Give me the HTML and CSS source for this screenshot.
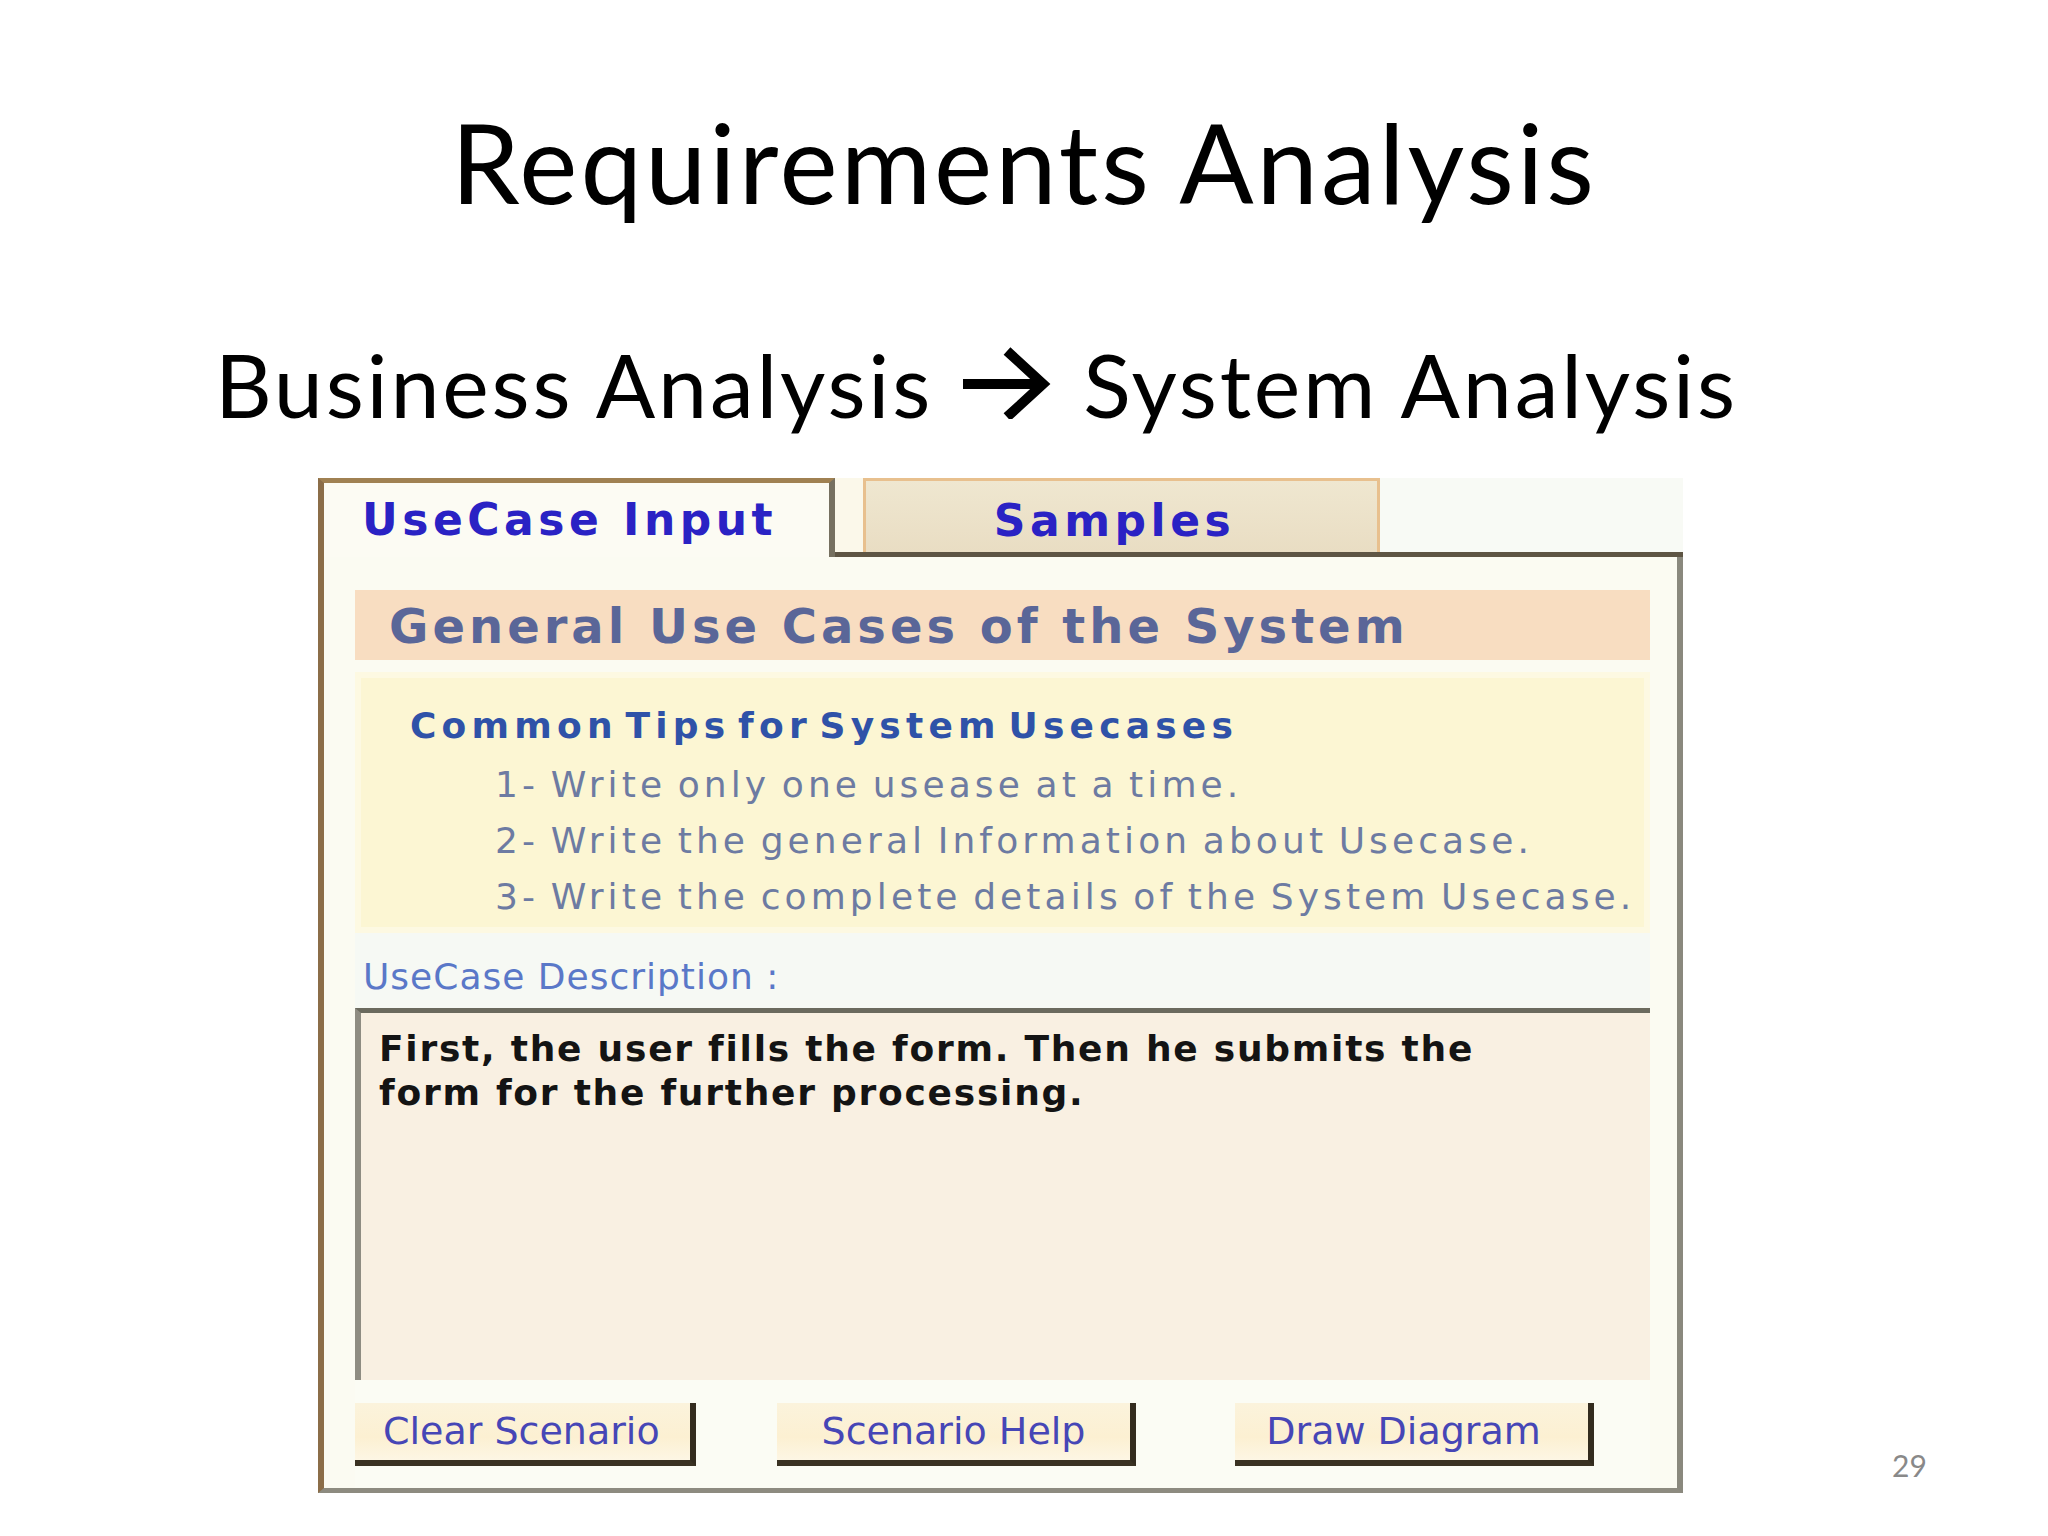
FILE: index.html
```html
<!DOCTYPE html>
<html lang="en">
<head>
<meta charset="utf-8">
<title>Requirements Analysis</title>
<link rel="stylesheet" href="styles.css">
</head>
<body>
<div class="slide">
  <h1 class="title">Requirements Analysis</h1>
  <div class="subtitle">
    <span>Business Analysis</span>
    <svg class="arrow" viewBox="0 0 88 72" width="88" height="72" aria-hidden="true">
      <path d="M0 37 H78" stroke="#000" stroke-width="10" fill="none"/>
      <path d="M44 4 L80 37 L44 70" stroke="#000" stroke-width="10" fill="none" stroke-linejoin="miter"/>
    </svg>
    <span>System Analysis</span>
  </div>
  <div class="bottom-row">
    <div class="panel">
      <div class="tabs">
        <div class="tab tab-active">UseCase Input</div>
        <div class="tab-rest">
          <div class="tab-gap"></div>
          <div class="tab tab-inactive">Samples</div>
          <div class="tab-fill"></div>
        </div>
      </div>
      <div class="panel-body">
        <div class="band">General Use Cases of the System</div>
        <div class="tips">
          <div class="tips-title">Common Tips for System Usecases</div>
          <div class="tip">1- Write only one usease at a time.</div>
          <div class="tip">2- Write the general Information about Usecase.</div>
          <div class="tip">3- Write the complete details of the System Usecase.</div>
        </div>
        <div class="desc-label">UseCase Description :</div>
        <div class="textarea">First, the user fills the form. Then he submits the<br>form for the further processing.</div>
        <div class="buttons">
          <div class="btn btn-clear">Clear Scenario</div>
          <div class="btn btn-help">Scenario Help</div>
          <div class="btn btn-draw">Draw Diagram</div>
        </div>
      </div>
    </div>
    <div class="page-num">29</div>
  </div>
</div>
</body>
</html>
```
FILE: styles.css
```css
html, body {
  margin: 0;
  padding: 0;
  background: #ffffff;
}

.slide {
  width: 2048px;
  height: 1536px;
  overflow: hidden;
  display: flex;
  flex-direction: column;
  font-family: Lato, "Open Sans", sans-serif;
  color: #000;
}

.title {
  margin: 95px 0 0 0;
  font-weight: 400;
  font-size: 110px;
  line-height: 132px;
  text-align: center;
  letter-spacing: 3px;
}

.subtitle {
  margin: 104px 0 0 215px;
  font-size: 88px;
  line-height: 106px;
  display: flex;
  align-items: baseline;
  white-space: nowrap;
  letter-spacing: 2.8px;
}

.arrow {
  margin: 0 32px 0 30px;
  align-self: flex-end;
  margin-bottom: 18px;
}

.bottom-row {
  margin-top: 41px;
  display: flex;
  align-items: flex-end;
}

.panel {
  margin-left: 318px;
  width: 1365px;
  display: flex;
  flex-direction: column;
  font-family: "DejaVu Sans", Verdana, sans-serif;
}

/* tabs */
.tabs {
  display: flex;
  height: 79px;
}

.tab {
  box-sizing: border-box;
  font-weight: 700;
  font-size: 44px;
  letter-spacing: 4.5px;
  color: #2a22c4;
  white-space: nowrap;
}

.tab-active {
  width: 517px;
  height: 79px;
  background: #fcfbf3;
  border-top: 5px solid #a08152;
  border-left: 6px solid #8b6d48;
  border-right: 6px solid #767060;
  padding: 10px 0 0 38px;
  line-height: 54px;
}

.tab-rest {
  flex: 1;
  display: flex;
  box-sizing: border-box;
  height: 79px;
  border-bottom: 5px solid #5e5544;
}

.tab-gap {
  width: 28px;
  background: #fbf8ea;
}

.tab-inactive {
  width: 517px;
  height: 74px;
  background: linear-gradient(180deg, #efe7d0 0%, #e9ddc3 100%);
  border: 3px solid #e8c08e;
  border-bottom: none;
  text-align: center;
  line-height: 80px;
  padding-right: 14px;
}

.tab-fill {
  flex: 1;
  background: #f8faf5;
}

/* body */
.panel-body {
  background: #fbfbf2;
  border-left: 6px solid #8b6d48;
  border-right: 6px solid #8a897e;
  border-bottom: 5px solid #8d8b80;
  padding: 33px 27px 0 31px;
  display: flex;
  flex-direction: column;
}

.band {
  height: 70px;
  background: #f8ddc1;
  color: #5a6698;
  font-weight: 700;
  font-size: 48px;
  letter-spacing: 4px;
  line-height: 72px;
  padding-left: 34px;
  white-space: nowrap;
}

.tips {
  margin-top: 12px;
  background: #fcf6d3;
  padding: 26px 0 8px 0;
  box-shadow: inset 0 0 0 6px #fdf9e2;
}

.tips-title {
  padding-left: 55px;
  font-weight: 700;
  font-size: 36px;
  letter-spacing: 5.2px;
  word-spacing: -10px;
  line-height: 56px;
  color: #2f52a8;
  margin-bottom: 3px;
  white-space: nowrap;
}

.tip {
  padding-left: 140px;
  font-size: 36px;
  letter-spacing: 4.1px;
  word-spacing: -4px;
  line-height: 56px;
  color: #6d7ba2;
  white-space: nowrap;
}

.desc-label {
  height: 75px;
  box-sizing: border-box;
  padding: 12px 0 0 8px;
  font-size: 36px;
  line-height: 63px;
  letter-spacing: 1px;
  color: #5a78c8;
  background: #f6f9f4;
  white-space: nowrap;
}

.textarea {
  height: 372px;
  box-sizing: border-box;
  background: #f9f0e2;
  border-top: 5px solid #6b6a5e;
  border-left: 6px solid #8e8c82;
  padding: 14px 0 0 18px;
  font-weight: 700;
  font-size: 36px;
  line-height: 44px;
  letter-spacing: 1.75px;
  color: #141414;
  white-space: nowrap;
}

.buttons {
  display: flex;
  padding: 23px 0 22px 0;
  background: #fbfcf4;
}

.btn {
  box-sizing: border-box;
  height: 63px;
  background: linear-gradient(180deg, #fbf3dc 0%, #fcf0d2 60%, #fdf6e4 100%);
  border-right: 6px solid #332c1e;
  border-bottom: 6px solid #3a3222;
  font-size: 38px;
  line-height: 57px;
  color: #4646b6;
  text-align: center;
  white-space: nowrap;
}

.btn-clear {
  width: 341px;
  text-align: left;
  padding-left: 28px;
}

.btn-help {
  width: 359px;
  margin-left: 81px;
}

.btn-draw {
  width: 359px;
  margin-left: 99px;
  padding-right: 16px;
}

.page-num {
  margin-left: 209px;
  margin-bottom: 10px;
  font-family: Lato, "Open Sans", sans-serif;
  font-size: 30px;
  line-height: 36px;
  color: #898989;
}
```
